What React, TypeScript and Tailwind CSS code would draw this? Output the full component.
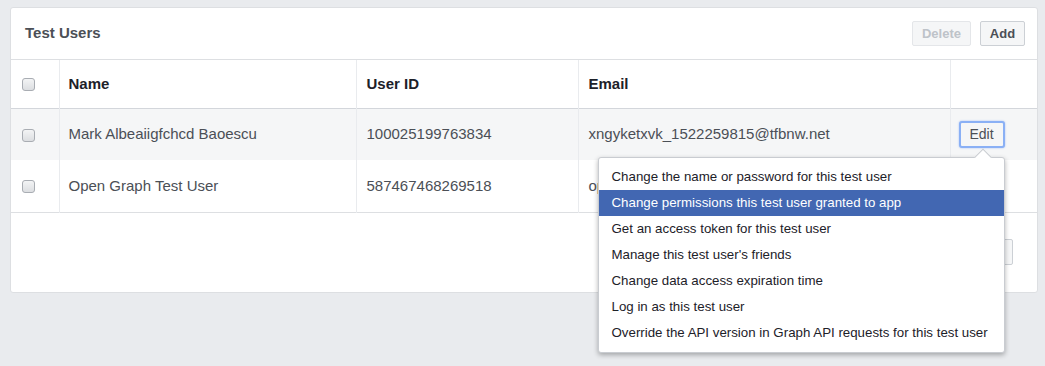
import React from "react";

const font = { fontFamily: '"Liberation Sans", Arial, sans-serif' };

function Check() {
  return (
    <span className="inline-block w-[13px] h-[13px] rounded-[3px] border border-[#a9adb3] bg-gradient-to-b from-[#f3f4f5] to-[#dcdee1] align-middle" />
  );
}

const menuItems = [
  "Change the name or password for this test user",
  "Change permissions this test user granted to app",
  "Get an access token for this test user",
  "Manage this test user's friends",
  "Change data access expiration time",
  "Log in as this test user",
  "Override the API version in Graph API requests for this test user",
];

export default function App() {
  return (
    <div className="w-[1045px] h-[366px] bg-[#e9ebee] pt-[7px] pl-[10px] overflow-hidden" style={font}>
      <div className="w-[1028px] bg-white border border-[#dddfe2] rounded-[3px]">
        <div className="h-[52px] flex items-center justify-between pl-[14px] pr-[12px] border-b border-[#dddfe2]">
          <div className="text-[15px] font-bold text-[#4b4f56]">Test Users</div>
          <div className="flex gap-[9px]">
            <button className="h-[25px] w-[59px] text-[13px] font-bold text-[#bec3c9] bg-[#f5f6f7] border border-[#e4e6e9] rounded-[2px]">
              Delete
            </button>
            <button className="h-[25px] w-[45px] text-[13px] font-bold text-[#4b4f56] bg-[#f5f6f7] border border-[#ccd0d5] rounded-[2px]">
              Add
            </button>
          </div>
        </div>
        <table className="w-full table-fixed border-collapse text-[15px]">
          <colgroup>
            <col className="w-[48px]" />
            <col className="w-[297px]" />
            <col className="w-[222px]" />
            <col className="w-[372px]" />
            <col />
          </colgroup>
          <thead>
            <tr className="h-[48px] border-b border-[#d3d6db]">
              <th className="pl-[11px] text-left border-r border-[#e9ebee]"><Check /></th>
              <th className="pl-[9px] text-left font-bold text-[#1d2129] border-r border-[#e9ebee]">Name</th>
              <th className="pl-[10px] text-left font-bold text-[#1d2129] border-r border-[#e9ebee]">User ID</th>
              <th className="pl-[10px] text-left font-bold text-[#1d2129] border-r border-[#e9ebee]">Email</th>
              <th />
            </tr>
          </thead>
          <tbody>
            <tr className="h-[52px] bg-[#f5f6f7]">
              <td className="pl-[11px] border-r border-[#e9ebee]"><Check /></td>
              <td className="pl-[9px] text-[#4b4f56] border-r border-[#e9ebee]">Mark Albeaiigfchcd Baoescu</td>
              <td className="pl-[10px] text-[#4b4f56] border-r border-[#e9ebee]">100025199763834</td>
              <td className="pl-[10px] text-[#4b4f56] border-r border-[#e9ebee]">xngyketxvk_1522259815@tfbnw.net</td>
              <td className="pl-[8px]">
                <div className="relative inline-block">
                  <button className="h-[27px] w-[46px] text-[14px] text-[#4b4f56] bg-[#f5f6f7] border-2 border-[#8ab0f5] rounded-[3px] shadow-[0_0_2px_#9fbcf7]">
                    Edit
                  </button>
                  <div className="absolute right-0 top-[36px] w-[407px] bg-white border border-[#c9ccd1] rounded-[3px] shadow-[0_2px_5px_rgba(0,0,0,0.3)] py-[6px] z-10">
                    <div className="absolute right-[15px] -top-[7px] w-[12px] h-[12px] bg-white border-l border-t border-[#c9ccd1] rotate-45" />
                    {menuItems.map((m, i) => (
                      <div
                        key={m}
                        className={
                          i === 1
                            ? "relative h-[26px] flex items-center pl-[13px] text-[13.3px] text-white bg-[#4267b2]"
                            : "relative h-[26px] flex items-center pl-[13px] text-[13.3px] text-[#1d2129]"
                        }
                      >
                        {m}
                      </div>
                    ))}
                  </div>
                </div>
              </td>
            </tr>
            <tr className="h-[52px] border-b border-[#dddfe2]">
              <td className="pl-[11px] border-r border-[#e9ebee]"><Check /></td>
              <td className="pl-[9px] text-[#4b4f56] border-r border-[#e9ebee]">Open Graph Test User</td>
              <td className="pl-[10px] text-[#4b4f56] border-r border-[#e9ebee]">587467468269518</td>
              <td className="pl-[10px] text-[#4b4f56] border-r border-[#e9ebee]">open_ukuzlhe_user@tfbnw.net</td>
              <td />
            </tr>
          </tbody>
        </table>
        <div className="h-[79px] flex items-center justify-end pr-[24px]">
          <button className="h-[26px] w-[60px] text-[12px] font-bold text-[#4b4f56] bg-[#f5f6f7] border border-[#ccd0d5] rounded-[2px]">
            Next
          </button>
        </div>
      </div>
    </div>
  );
}
